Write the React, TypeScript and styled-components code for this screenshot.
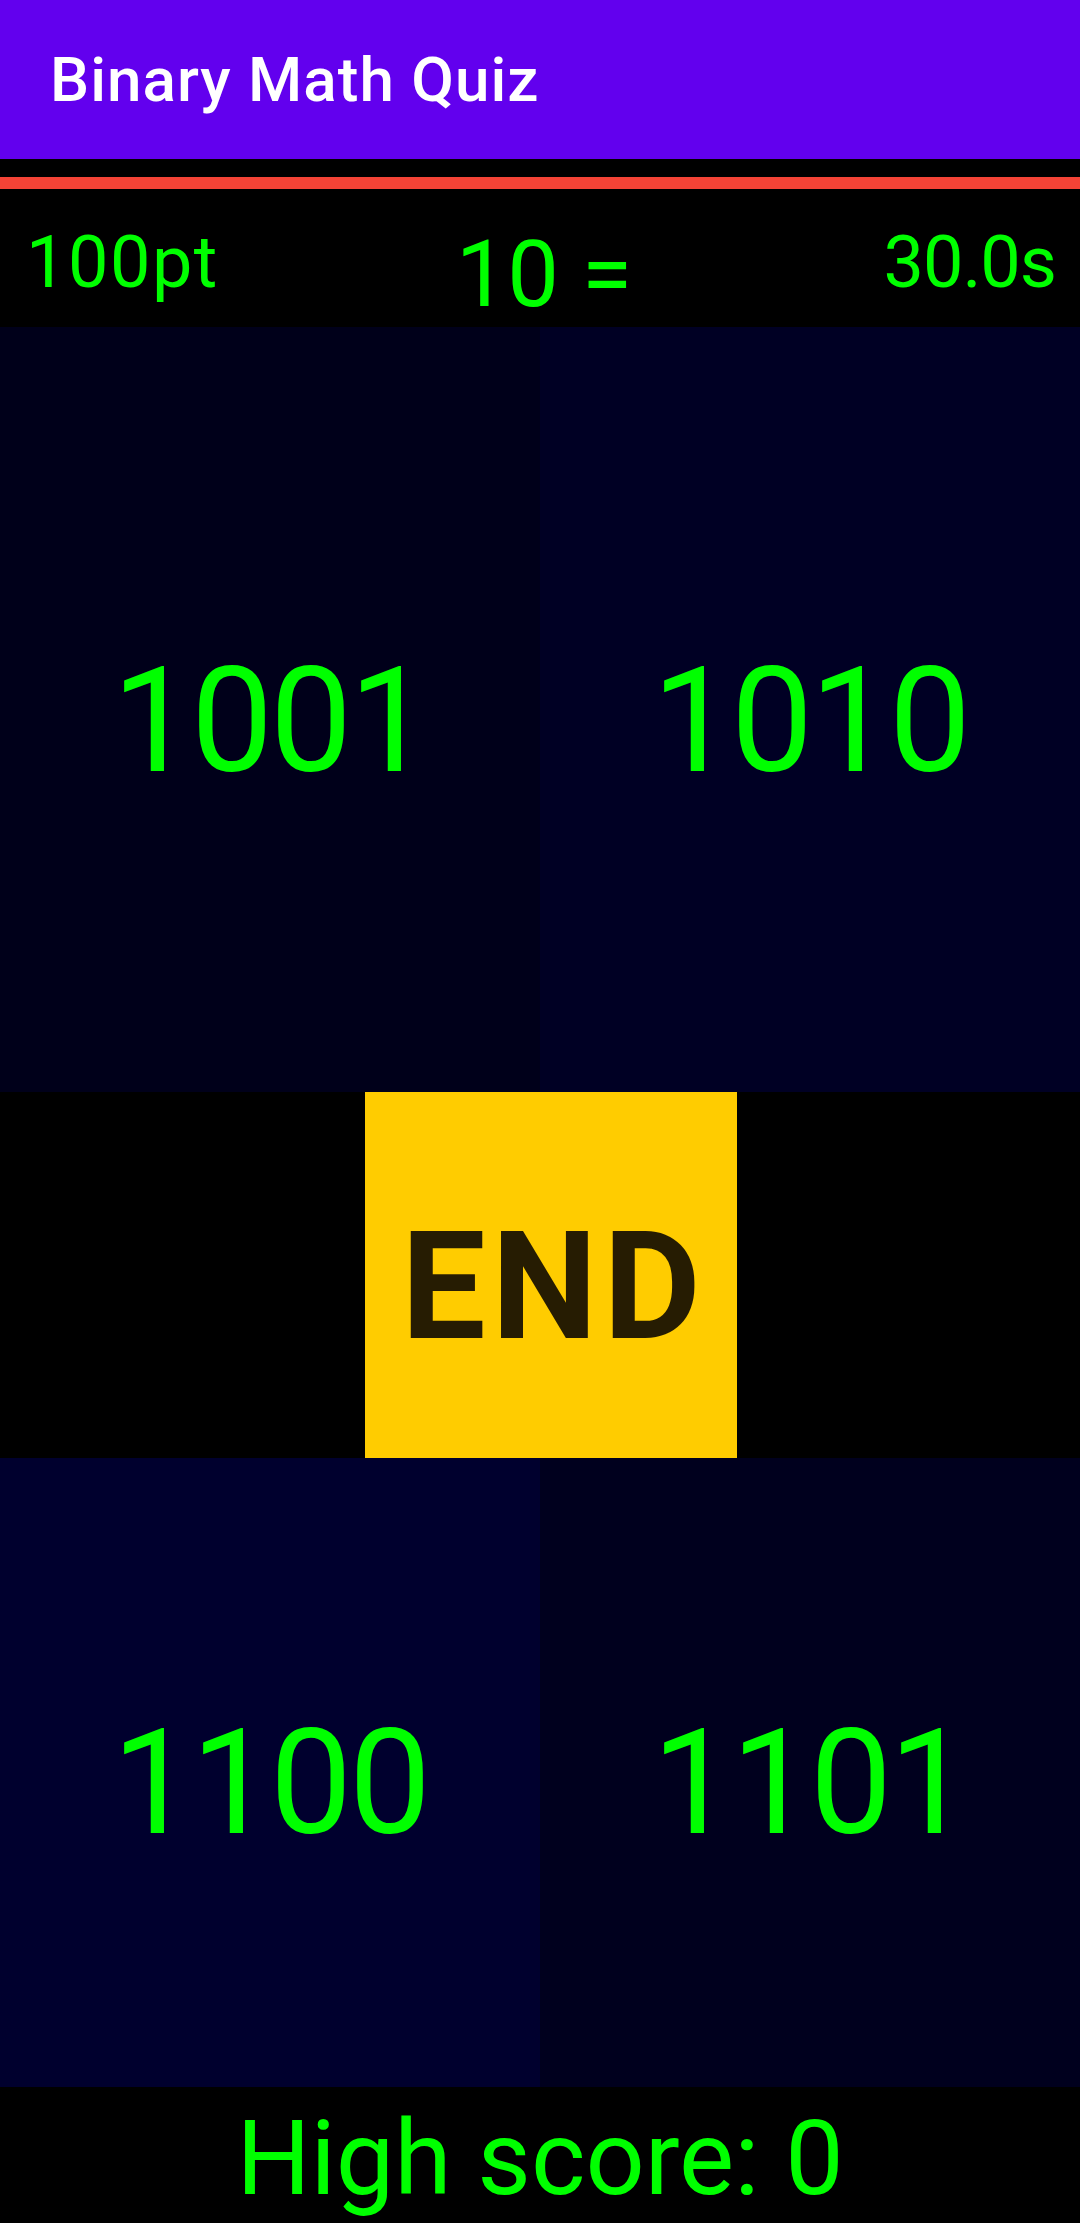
import React from "react";
import styled, { createGlobalStyle } from "styled-components";

const Global = createGlobalStyle`
  html, body { margin: 0; padding: 0; background: #000; }
  body { font-family: Roboto, "Noto Sans", sans-serif; }
  * { box-sizing: border-box; }
`;

const Screen = styled.div`
  width: 1080px;
  height: 2223px;
  display: flex;
  flex-direction: column;
  background: #000;
  overflow: hidden;
`;

const AppBar = styled.header`
  height: 159px;
  flex: none;
  background: #6200ee;
  display: flex;
  align-items: center;
  padding-left: 50px;
`;

const Title = styled.h1`
  margin: 0;
  font-family: Roboto, sans-serif;
  font-weight: 500;
  font-size: 62px;
  letter-spacing: 1px;
  line-height: 1;
  color: #fff;
`;

const Spacer = styled.div`
  height: 18px;
  flex: none;
`;

const TimeBar = styled.div`
  height: 12px;
  flex: none;
  background: #f44336;
`;

const Stats = styled.div`
  height: 138px;
  flex: none;
  display: grid;
  grid-template-columns: 1fr auto 1fr;
  align-items: start;
  padding: 38px 24px 0 26px;
`;

const Stat = styled.span<{ $align: "start" | "end"; $spacing: number }>`
  justify-self: ${(p) => p.$align};
  font-size: 72px;
  letter-spacing: ${(p) => p.$spacing}px;
  line-height: 1;
  color: #00ff00;
`;

const Question = styled.span`
  font-size: 92px;
  line-height: 1;
  margin-top: 2px;
  margin-left: 6px;
  color: #00ff00;
`;

const AnswerRow = styled.div<{ $h: number }>`
  height: ${(p) => p.$h}px;
  flex: none;
  display: grid;
  grid-template-columns: 540px 540px;
`;

const Answer = styled.button<{ $bg: string; $shift: number }>`
  border: 0;
  margin: 0;
  background: ${(p) => p.$bg};
  display: flex;
  align-items: center;
  justify-content: center;
  padding: ${(p) => p.$shift}px 0 0 0;
  font-family: Roboto, sans-serif;
  font-size: 146px;
  letter-spacing: -3px;
  line-height: 1;
  color: #00ff00;
  cursor: pointer;
`;

const MiddleRow = styled.div`
  height: 366px;
  flex: none;
  display: flex;
  justify-content: center;
  background: #000;
`;

const EndButton = styled.button`
  width: 372px;
  height: 100%;
  border: 0;
  margin: 0 0 0 22px;
  background: #ffcc00;
  display: flex;
  align-items: center;
  justify-content: center;
  padding: 23px 0 0 6px;
  font-family: Roboto, sans-serif;
  font-weight: 700;
  font-size: 150px;
  letter-spacing: 6px;
  line-height: 1;
  color: #261c02;
  cursor: pointer;
`;

const Footer = styled.footer`
  flex: 1;
  display: flex;
  align-items: center;
  justify-content: center;
  padding-top: 8px;
  font-size: 104px;
  line-height: 1;
  color: #00ff00;
`;

export default function App() {
  return (
    <Screen>
      <Global />
      <AppBar>
        <Title>Binary Math Quiz</Title>
      </AppBar>
      <Spacer />
      <TimeBar />
      <Stats>
        <Stat $align="start" $spacing={1.5}>100pt</Stat>
        <Question>10 =</Question>
        <Stat $align="end" $spacing={-1}>30.0s</Stat>
      </Stats>
      <AnswerRow $h={765}>
        <Answer $bg="#00001a" $shift={24}>1001</Answer>
        <Answer $bg="#000024" $shift={24}>1010</Answer>
      </AnswerRow>
      <MiddleRow>
        <EndButton>END</EndButton>
      </MiddleRow>
      <AnswerRow $h={629}>
        <Answer $bg="#00002e" $shift={22}>1100</Answer>
        <Answer $bg="#00001e" $shift={22}>1101</Answer>
      </AnswerRow>
      <Footer>High score: 0</Footer>
    </Screen>
  );
}
